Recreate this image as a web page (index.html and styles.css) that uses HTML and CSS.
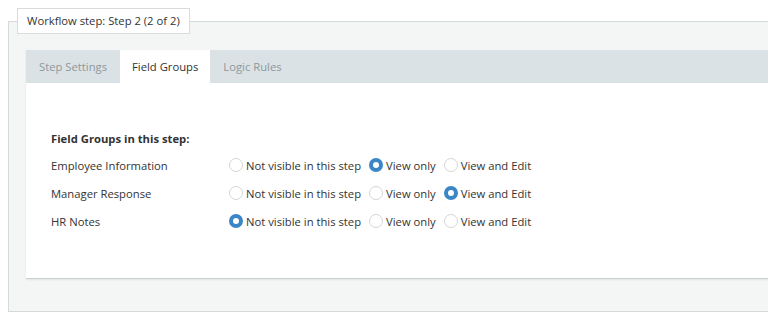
FILE: index.html
```html
<!DOCTYPE html>
<html lang="en">

<head>
	<meta charset="UTF-8">
	<meta name="viewport" content="width=device-width, initial-scale=1.0">
	<title>Workflow step</title>
	<link rel="stylesheet" href="styles.css">
</head>

<body>

	<fieldset class="step">
		<legend>Workflow step: Step 2 (2 of 2)</legend>

		<div class="panel">
			<div class="tabs">
				<div class="tab">Step Settings</div>
				<div class="tab active">Field Groups</div>
				<div class="tab">Logic Rules</div>
			</div>

			<div class="panel-body">
				<h3>Field Groups in this step:</h3>

				<div class="row">
					<div class="name">Employee Information</div>
					<label class="opt"><span class="radio"></span>Not visible in this step</label>
					<label class="opt"><span class="radio on"></span>View only</label>
					<label class="opt"><span class="radio"></span>View and Edit</label>
				</div>

				<div class="row">
					<div class="name">Manager Response</div>
					<label class="opt"><span class="radio"></span>Not visible in this step</label>
					<label class="opt"><span class="radio"></span>View only</label>
					<label class="opt"><span class="radio on"></span>View and Edit</label>
				</div>

				<div class="row">
					<div class="name">HR Notes</div>
					<label class="opt"><span class="radio on"></span>Not visible in this step</label>
					<label class="opt"><span class="radio"></span>View only</label>
					<label class="opt"><span class="radio"></span>View and Edit</label>
				</div>
			</div>
		</div>
	</fieldset>

</body>

</html>
```

FILE: styles.css
```css
*,
*::before,
*::after {
	box-sizing: border-box;
}

body {
	margin: 0;
	padding: 0;
	font-family: "Open Sans", sans-serif;
	font-size: 11.25px;
	color: #333;
	background-color: #fff;
	overflow: hidden;
}

.step {
	width: 820px;
	margin: 8px 0 0 8px;
	padding: 0 0 32px 17px;
	border: 1px solid #d6d9da;
	background-color: #f4f5f5;
}

.step legend {
	margin-left: -9px;
	padding: 0 9px;
	line-height: 24px;
	background-color: #fff;
	border: 1px solid #d9dcdd;
	color: #333;
	font-size: 11.25px;
}

.panel {
	margin-top: 16px;
	background-color: #fff;
	border-bottom: 1px solid #c9d1d4;
	box-shadow: 0 1px 2px rgba(0, 0, 0, 0.08);
}

.tabs {
	display: flex;
	height: 33px;
	background-color: #dbe2e5;
}

.tab {
	display: flex;
	align-items: center;
	padding: 0 13px;
	color: #8e989c;
}

.tab.active {
	padding: 0 12px;
	background-color: #fff;
	color: #333;
}

.panel-body {
	padding: 48px 25px 43px;
}

.panel-body h3 {
	margin: 0 0 5px;
	font-size: 11.25px;
	font-weight: bold;
}

.row {
	display: flex;
	align-items: center;
	height: 28px;
}

.name {
	width: 178px;
}

.opt {
	display: flex;
	align-items: center;
	margin-right: 8px;
}

.radio {
	width: 14px;
	height: 14px;
	margin-right: 3px;
	border: 1px solid #d6d6d6;
	border-radius: 50%;
	background-color: #fff;
}

.radio.on {
	border: 4px solid #3b86c6;
}
```
